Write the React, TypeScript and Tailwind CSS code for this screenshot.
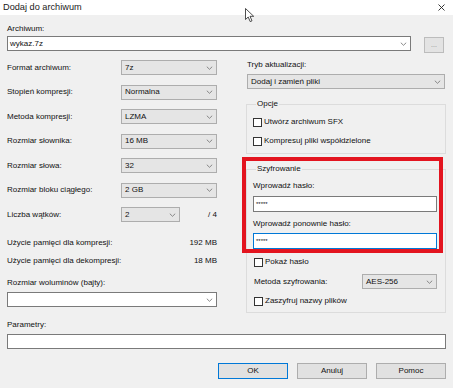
import React from "react";

const Chevron = () => (
  <svg width="7" height="4" viewBox="0 0 7 4" className="shrink-0">
    <path d="M0.8 0.7L3.5 3.3L6.2 0.7" fill="none" stroke="#7c7c7c" strokeWidth="0.9" />
  </svg>
);

const Select = ({ value, className }: { value: string; className: string }) => (
  <div className={`flex items-center h-[15px] border border-[#adadad] bg-[#e5e5e5] pl-[3px] pr-[3px] ${className}`}>
    <span className="flex-1 whitespace-nowrap">{value}</span>
    <Chevron />
  </div>
);

const Check = ({ label, className }: { label: string; className: string }) => (
  <div className={`flex items-center h-[10px] gap-[2px] ${className}`}>
    <span className="w-[9px] h-[9px] border border-[#333333] bg-white shrink-0" />
    <span className="whitespace-nowrap">{label}</span>
  </div>
);

const rows: [string, string][] = [
  ["Format archiwum:", "7z"],
  ["Stopień kompresji:", "Normalna"],
  ["Metoda kompresji:", "LZMA"],
  ["Rozmiar słownika:", "16 MB"],
  ["Rozmiar słowa:", "32"],
  ["Rozmiar bloku ciągłego:", "2 GB"],
];

export default function App() {
  return (
    <div className="relative w-[453px] h-[388px] overflow-hidden bg-[#f0f0f0] text-[#111111] font-['Liberation_Sans',Arial,sans-serif] text-[8px] leading-[10px]">
      {/* title bar */}
      <div className="h-[15px] bg-white flex items-center justify-between pl-[3px] pr-[8px]">
        <span className="text-[9.2px] leading-[11px] text-[#1a1a1a]">Dodaj do archiwum</span>
        <svg width="7" height="7" viewBox="0 0 7 7">
          <path d="M0.5 0.5L6.5 6.5M6.5 0.5L0.5 6.5" stroke="#222" strokeWidth="0.9" fill="none" />
        </svg>
      </div>

      <div className="px-[7px]">
        <div className="mt-[9px] h-[10px]">Archiwum:</div>
        <div className="mt-[2px] flex items-start h-[17px]">
          <div className="w-[404px] h-[15px] border border-[#7a7a7a] bg-white flex items-center pl-[2px] pr-[3px]">
            <span className="flex-1">wykaz.7z</span>
            <Chevron />
          </div>
          <div className="ml-auto mr-[2px] mt-[1px] w-[20px] h-[16px] border border-[#bcbcbc] bg-[#e3e3e3] flex items-center justify-center text-[#8a8a8a] text-[7px]">
            ...
          </div>
        </div>

        <div className="mt-[7px] flex items-start">
          {/* left column */}
          <div className="w-[210px] flex flex-col">
            <div className="flex flex-col gap-[9.5px]">
              {rows.map(([l, v]) => (
                <div key={l} className="flex items-center h-[15px]">
                  <span className="w-[114px] whitespace-nowrap">{l}</span>
                  <Select value={v} className="w-[96px]" />
                </div>
              ))}
              <div className="flex items-center h-[15px]">
                <span className="w-[114px] whitespace-nowrap">Liczba wątków:</span>
                <Select value="2" className="w-[59px]" />
                <span className="ml-auto">/ 4</span>
              </div>
            </div>
            <div className="mt-[16px] flex justify-between h-[10px]">
              <span>Użycie pamięci dla kompresji:</span>
              <span>192 MB</span>
            </div>
            <div className="mt-[8px] flex justify-between h-[10px]">
              <span>Użycie pamięci dla dekompresji:</span>
              <span>18 MB</span>
            </div>
            <div className="mt-[12px] h-[10px]">Rozmiar woluminów (bajty):</div>
            <div className="mt-[4px] h-[15px] border border-[#7a7a7a] bg-white flex items-center justify-end pr-[3px]">
              <Chevron />
            </div>
          </div>

          {/* right column */}
          <div className="ml-[29px] w-[200px] flex flex-col">
            <div className="h-[10px] pl-[1px]">Tryb aktualizacji:</div>
            <Select value="Dodaj i zamień pliki" className="mt-[4px] mx-[1px] h-[14px]" />

            <fieldset className="mt-[10px] border border-[#dcdcdc] pl-[6px] pr-[8px] pt-[8px] pb-[7px] flex flex-col gap-[9px]">
              <legend className="ml-[3px] px-[1px] leading-[10px]">Opcje</legend>
              <Check label="Utwórz archiwum SFX" className="" />
              <Check label="Kompresuj pliki współdzielone" className="" />
            </fieldset>

            <fieldset className="mt-[10px] border border-[#dcdcdc] pl-[6px] pr-[8px] pt-[7px] pb-[6px] flex flex-col">
              <legend className="ml-[3px] px-[1px] leading-[10px]">Szyfrowanie</legend>
              <div className="h-[10px]">Wprowadź hasło:</div>
              <div className="mt-[5px] h-[16px] border border-[#7a7a7a] bg-white flex items-center pl-[2px] text-[6px]">
                *****
              </div>
              <div className="mt-[7px] h-[10px]">Wprowadź ponownie hasło:</div>
              <div className="mt-[4px] h-[16px] border border-[#0078d7] bg-white flex items-center pl-[2px] text-[6px]">
                *****
              </div>
              <Check label="Pokaż hasło" className="mt-[8px] ml-[1px]" />
              <div className="mt-[7px] flex items-center h-[15px] pl-[1px]">
                <span className="whitespace-nowrap">Metoda szyfrowania:</span>
                <Select value="AES-256" className="ml-auto w-[75px]" />
              </div>
              <Check label="Zaszyfruj nazwy plików" className="mt-[7px] ml-[1px]" />
            </fieldset>
          </div>
        </div>

        <div className="mt-[7px] h-[10px]">Parametry:</div>
        <div className="mt-[4px] h-[15px] border border-[#7a7a7a] bg-white" />

        <div className="mt-[14px] flex justify-end gap-[9px]">
          <div className="w-[70px] h-[16px] border border-[#0078d7] bg-[#e1e1e1] flex items-center justify-center">OK</div>
          <div className="w-[70px] h-[16px] border border-[#adadad] bg-[#e1e1e1] flex items-center justify-center">Anuluj</div>
          <div className="w-[70px] h-[16px] border border-[#adadad] bg-[#e1e1e1] flex items-center justify-center">Pomoc</div>
        </div>
      </div>

      {/* red annotation frame */}
      <div className="absolute left-[242px] top-[157px] w-[201px] h-[96px] border-[4px] border-[#e3141f]" />

      {/* mouse cursor */}
      <svg className="absolute left-[245px] top-[8px]" width="10" height="15" viewBox="0 0 10 15">
        <path d="M0.5 0.5L0.5 11.5L3.2 9L5.2 13.6L7 12.8L5 8.3L8.7 8.3Z" fill="#fff" stroke="#222" strokeWidth="0.8" strokeLinejoin="round" />
      </svg>
    </div>
  );
}
